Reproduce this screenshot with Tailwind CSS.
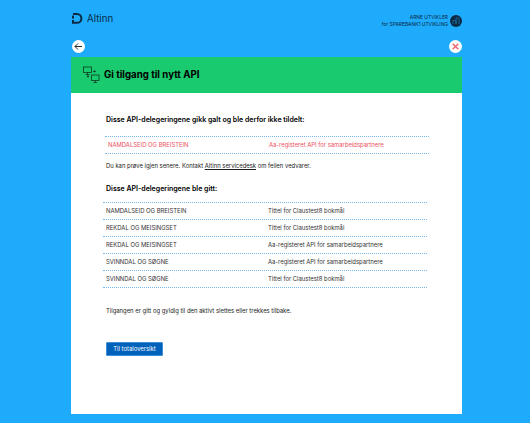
<!DOCTYPE html>
<html><head><meta charset="utf-8"><script src="https://cdn.jsdelivr.net/npm/@tailwindcss/browser@4"></script></head>
<body class="m-0">
<div class="w-[530px] h-[423px] overflow-hidden bg-[#1eabfb] font-['Inter','Liberation_Sans',sans-serif] flex flex-col items-start pl-[71px] text-[#000]">
  <header class="w-[391px] h-[40px] shrink-0 flex items-start justify-between pt-[13px]">
    <div class="flex items-center gap-[4px] pl-[1px]">
      <svg width="11" height="11" viewBox="0 0 11 11"><path d="M1 1H5A4.3 4.3 0 0 1 5 9.8H1V7" fill="none" stroke="#0a2a45" stroke-width="2"/><rect x="0" y="2.6" width="2" height="3" fill="#0a2a45"/></svg>
      <span class="text-[9.7px] leading-none text-[#0a2a45]">Altinn</span>
    </div>
    <div class="flex items-center gap-[2px] mt-[1px]">
      <div class="text-right text-[4.9px] leading-[7px] text-[#0a2a45]"><div>ARNE UTVIKLER</div><div>for SPAREBANK1 UTVIKLING</div></div>
      <div class="w-[12px] h-[12px] rounded-full bg-[#0a2a45] flex items-center justify-center">
        <svg width="8" height="8" viewBox="0 0 8 8"><path d="M1 7V3.5H4V7M4 7V1H7V7" fill="none" stroke="#1f6f9f" stroke-width="0.8"/></svg>
      </div>
    </div>
  </header>
  <div class="w-[391px] h-[17px] shrink-0 flex items-start justify-between">
    <button class="w-[13px] h-[13px] ml-[1px] rounded-full bg-white flex items-center justify-center">
      <svg width="9" height="9" viewBox="0 0 9 9"><path d="M8 4.5H1M4 1.5L1 4.5L4 7.5" fill="none" stroke="#111" stroke-width="0.9"/></svg>
    </button>
    <button class="w-[13px] h-[13px] rounded-full bg-white flex items-center justify-center">
      <svg width="9" height="9" viewBox="0 0 9 9"><path d="M1.7 1.7L7.3 7.3M7.3 1.7L1.7 7.3" fill="none" stroke="#ec5f6e" stroke-width="1.3"/></svg>
    </button>
  </div>
  <main class="w-[391px] flex-1 bg-white mb-[9px]">
    <div class="h-[36px] bg-[#1aca6f] flex items-center pl-[12px] gap-[3px]">
      <svg width="18" height="18" viewBox="0 0 18 18" fill="none" stroke="#0b3a20" stroke-width="0.8"><rect x="0.5" y="1" width="8" height="5.5"/><path d="M2.5 8.5H6.5M4.5 6.5V8.5"/><rect x="8.5" y="9" width="7.5" height="5.5"/><path d="M10.5 16.5H14M12.3 14.5V16.5"/><path d="M10.5 5H12.5L11.5 6.2Z M4 10H6L5 11.2Z" fill="#0b3a20"/></svg>
      <h1 class="text-[9.7px] font-bold leading-none">Gi tilgang til nytt API</h1>
    </div>
    <div class="pl-[35px] w-[358px]">
      <h2 class="text-[7px] font-semibold leading-[9px] mt-[22px]">Disse API-delegeringene gikk galt og ble derfor ikke tildelt:</h2>
      <div class="mt-[12px] ml-[-1px] w-[324px] h-[18px] border-t border-b border-dotted border-[#74b8ee] flex items-center text-[5.9px] text-[#ec4f60] pl-[3px]"><span class="w-[161px]">NAMDALSEID OG BREISTEIN</span><span>Aa-registeret API for samarbeidspartnere</span></div>
      <p class="text-[5.9px] leading-[8px] mt-[8px] text-[#222]">Du kan prøve igjen senere. Kontakt <span class="underline">Altinn servicedesk</span> om feilen vedvarer.</p>
      <h2 class="text-[7px] font-semibold leading-[9px] mt-[14px]">Disse API-delegeringene ble gitt:</h2>
      <div class="mt-[9px] ml-[-3px] w-[324px] border-t border-dotted border-[#74b8ee] text-[5.9px] text-[#333]">
        <div class="h-[17px] pl-[3px] border-b border-dotted border-[#74b8ee] flex items-center"><span class="w-[162px]">NAMDALSEID OG BREISTEIN</span><span>Tittel for Claustest8 bokmål</span></div>
        <div class="h-[17px] pl-[3px] border-b border-dotted border-[#74b8ee] flex items-center"><span class="w-[162px]">REKDAL OG MEISINGSET</span><span>Tittel for Claustest8 bokmål</span></div>
        <div class="h-[17px] pl-[3px] border-b border-dotted border-[#74b8ee] flex items-center"><span class="w-[162px]">REKDAL OG MEISINGSET</span><span>Aa-registeret API for samarbeidspartnere</span></div>
        <div class="h-[17px] pl-[3px] border-b border-dotted border-[#74b8ee] flex items-center"><span class="w-[162px]">SVINNDAL OG SØGNE</span><span>Aa-registeret API for samarbeidspartnere</span></div>
        <div class="h-[17px] pl-[3px] border-b border-dotted border-[#74b8ee] flex items-center"><span class="w-[162px]">SVINNDAL OG SØGNE</span><span>Tittel for Claustest8 bokmål</span></div>
      </div>
      <p class="text-[5.9px] leading-[8px] mt-[19px] text-[#222]">Tilgangen er gitt og gyldig til den aktivt slettes eller trekkes tilbake.</p>
      <button class="mt-[27px] block w-[57px] h-[14px] bg-[#0062ba] border border-[#3f8fd8] rounded-[1px] text-white text-[5.9px] leading-none">Til totaloversikt</button>
    </div>
  </main>
</div>
</body></html>
